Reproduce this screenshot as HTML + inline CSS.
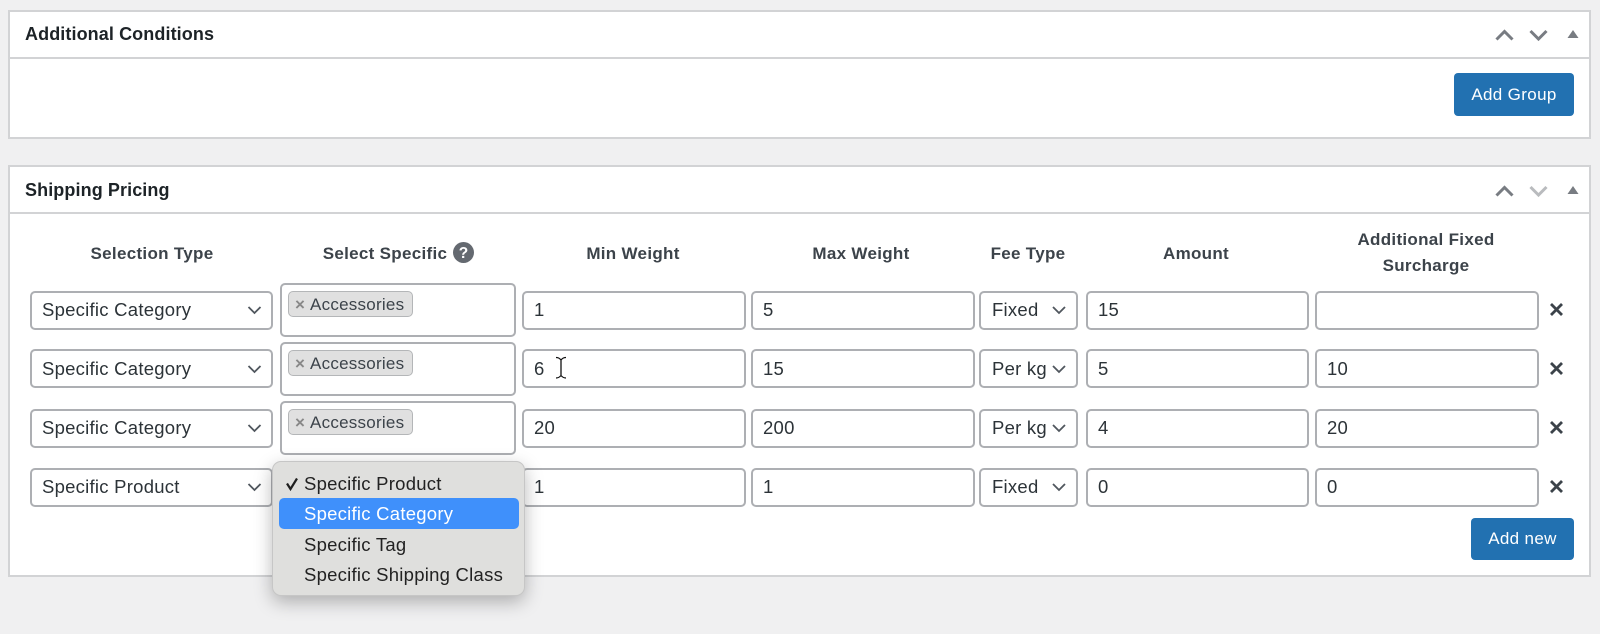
<!DOCTYPE html>
<html><head><meta charset="utf-8">
<style>
html,body{margin:0;padding:0;width:1600px;height:634px;overflow:hidden;background:#f0f0f1}
body{position:relative;font-family:"Liberation Sans",sans-serif;color:#2c3338;filter:blur(.35px)}
.p{position:absolute;box-sizing:border-box;background:#fff;border:2px solid #d2d3d5}
.l{position:absolute;background:#d2d3d5;height:2px}
.t{position:absolute;white-space:nowrap;line-height:20px;font-size:18.5px;letter-spacing:.25px}
.h{position:absolute;white-space:nowrap;line-height:20px;font-size:17px;font-weight:bold;color:#3c434a;transform:translateX(-50%);letter-spacing:.3px}
.ti{position:absolute;white-space:nowrap;line-height:20px;font-size:18px;font-weight:bold;color:#1d2327;letter-spacing:.1px}
.b{position:absolute;box-sizing:border-box;background:#fff;border:2px solid #adafb3;border-radius:5px}
.btn{position:absolute;box-sizing:border-box;background:#2271b1;border-radius:4px;color:#fff;font-size:17px;text-align:center;letter-spacing:.35px}
.chip{position:absolute;box-sizing:border-box;background:#e0e0e0;border:1.5px solid #b4b6b8;border-radius:5px;left:288px;width:125px;height:26px}
svg{position:absolute;overflow:visible}
.s{position:absolute}
</style></head><body>

<div class="p" style="left:8px;top:10px;width:1583px;height:129px"></div>
<div class="l" style="left:9px;top:57px;width:1581px"></div>
<div class="ti" style="left:25px;top:24px">Additional Conditions</div>
<div class="btn" style="left:1454px;top:73px;width:120px;height:43px;line-height:43px">Add Group</div>

<div class="p" style="left:8px;top:165px;width:1583px;height:412px"></div>
<div class="l" style="left:9px;top:212px;width:1581px"></div>
<div class="ti" style="left:25px;top:180px">Shipping Pricing</div>

<svg style="left:0;top:0" width="1600" height="634" fill="none">
<path d="M1496.500 39.500l8-8 8 8M1530.500 31l8 8 8-8" stroke="#787c82" stroke-width="3"/>
<path d="M1567.500 38l5.500-8 5.500 8z" fill="#787c82"/>
<path d="M1496.500 195.500l8-8 8 8" stroke="#787c82" stroke-width="3"/>
<path d="M1530.500 187l8 8 8-8" stroke="#b9bbbe" stroke-width="3"/>
<path d="M1567.500 194l5.500-8 5.500 8z" fill="#787c82"/>
</svg>

<div class="h" style="left:152px;top:244px">Selection Type</div>
<div class="h" style="left:385px;top:244px">Select Specific</div>
<svg style="left:453px;top:242px" width="21" height="21"><circle cx="10.500" cy="10.500" r="10.500" fill="#646970"/><text x="10.500" y="16" font-family="Liberation Sans" font-weight="bold" font-size="15.500" fill="#fff" text-anchor="middle">?</text></svg>
<div class="h" style="left:633px;top:244px">Min Weight</div>
<div class="h" style="left:861px;top:244px">Max Weight</div>
<div class="h" style="left:1028px;top:244px">Fee Type</div>
<div class="h" style="left:1196px;top:244px">Amount</div>
<div class="h" style="left:1426px;top:230px">Additional Fixed</div>
<div class="h" style="left:1426px;top:256px">Surcharge</div>

<!-- row 1 -->
<div class="b" style="left:30px;top:291px;width:243px;height:39px"></div>
<div class="t" style="left:42px;top:300px">Specific Category</div>
<div class="b" style="left:280px;top:283px;width:236px;height:54px"></div>
<div class="chip" style="top:291px"></div>
<div class="t" style="left:295px;top:295px;font-size:17px;color:#888;font-weight:bold">×</div>
<div class="t" style="left:310px;top:295px;font-size:17px;letter-spacing:.25px;color:#3c434a">Accessories</div>
<div class="b" style="left:522px;top:291px;width:224px;height:39px"></div>
<div class="t" style="left:534px;top:300px">1</div>
<div class="b" style="left:751px;top:291px;width:224px;height:39px"></div>
<div class="t" style="left:763px;top:300px">5</div>
<div class="b" style="left:979px;top:291px;width:99px;height:39px"></div>
<div class="t" style="left:992px;top:300px">Fixed</div>
<div class="b" style="left:1086px;top:291px;width:223px;height:39px"></div>
<div class="t" style="left:1098px;top:300px">15</div>
<div class="b" style="left:1315px;top:291px;width:224px;height:39px"></div>

<!-- row 2 -->
<div class="b" style="left:30px;top:349px;width:243px;height:39px"></div>
<div class="t" style="left:42px;top:359px">Specific Category</div>
<div class="b" style="left:280px;top:342px;width:236px;height:54px"></div>
<div class="chip" style="top:350px"></div>
<div class="t" style="left:295px;top:354px;font-size:17px;color:#888;font-weight:bold">×</div>
<div class="t" style="left:310px;top:354px;font-size:17px;letter-spacing:.25px;color:#3c434a">Accessories</div>
<div class="b" style="left:522px;top:349px;width:224px;height:39px"></div>
<div class="t" style="left:534px;top:359px">6</div>
<div class="b" style="left:751px;top:349px;width:224px;height:39px"></div>
<div class="t" style="left:763px;top:359px">15</div>
<div class="b" style="left:979px;top:349px;width:99px;height:39px"></div>
<div class="t" style="left:992px;top:359px">Per kg</div>
<div class="b" style="left:1086px;top:349px;width:223px;height:39px"></div>
<div class="t" style="left:1098px;top:359px">5</div>
<div class="b" style="left:1315px;top:349px;width:224px;height:39px"></div>
<div class="t" style="left:1327px;top:359px">10</div>

<!-- row 3 -->
<div class="b" style="left:30px;top:409px;width:243px;height:39px"></div>
<div class="t" style="left:42px;top:418px">Specific Category</div>
<div class="b" style="left:280px;top:401px;width:236px;height:54px"></div>
<div class="chip" style="top:409px"></div>
<div class="t" style="left:295px;top:413px;font-size:17px;color:#888;font-weight:bold">×</div>
<div class="t" style="left:310px;top:413px;font-size:17px;letter-spacing:.25px;color:#3c434a">Accessories</div>
<div class="b" style="left:522px;top:409px;width:224px;height:39px"></div>
<div class="t" style="left:534px;top:418px">20</div>
<div class="b" style="left:751px;top:409px;width:224px;height:39px"></div>
<div class="t" style="left:763px;top:418px">200</div>
<div class="b" style="left:979px;top:409px;width:99px;height:39px"></div>
<div class="t" style="left:992px;top:418px">Per kg</div>
<div class="b" style="left:1086px;top:409px;width:223px;height:39px"></div>
<div class="t" style="left:1098px;top:418px">4</div>
<div class="b" style="left:1315px;top:409px;width:224px;height:39px"></div>
<div class="t" style="left:1327px;top:418px">20</div>

<!-- row 4 -->
<div class="b" style="left:30px;top:468px;width:243px;height:39px"></div>
<div class="t" style="left:42px;top:477px">Specific Product</div>
<div class="b" style="left:522px;top:468px;width:224px;height:39px"></div>
<div class="t" style="left:534px;top:477px">1</div>
<div class="b" style="left:751px;top:468px;width:224px;height:39px"></div>
<div class="t" style="left:763px;top:477px">1</div>
<div class="b" style="left:979px;top:468px;width:99px;height:39px"></div>
<div class="t" style="left:992px;top:477px">Fixed</div>
<div class="b" style="left:1086px;top:468px;width:223px;height:39px"></div>
<div class="t" style="left:1098px;top:477px">0</div>
<div class="b" style="left:1315px;top:468px;width:224px;height:39px"></div>
<div class="t" style="left:1327px;top:477px">0</div>

<svg style="left:0;top:0" width="1600" height="634" fill="none">
<g stroke="#50575e" stroke-width="1.800">
<path d="M248.500 307l6 6 6-6M248.500 366l6 6 6-6M248.500 425l6 6 6-6M248.500 484l6 6 6-6"/>
<path d="M1053 307l6 6 6-6M1053 366l6 6 6-6M1053 425l6 6 6-6M1053 484l6 6 6-6"/>
</g>
<g stroke="#3c434a" stroke-width="2.800">
<path d="M1551 304l11 11M1562 304l-11 11M1551 363l11 11M1562 363l-11 11M1551 422l11 11M1562 422l-11 11M1551 481l11 11M1562 481l-11 11"/>
</g>
<path d="M556 357.500c2.500 0 3.500.8 5 2.500 1.500-1.700 2.500-2.500 5-2.500M561 360v15M556 378c2.500 0 3.500-.8 5-2.500 1.500 1.700 2.500 2.500 5 2.500" stroke="#111" stroke-width="1.300"/>
</svg>

<div class="btn" style="left:1471px;top:518px;width:103px;height:42px;line-height:42px">Add new</div>

<!-- dropdown -->
<div class="s" style="left:272px;top:461px;width:253px;height:135px;box-sizing:border-box;background:#dfdfdd;border:1px solid #c6c6c6;border-radius:9px;box-shadow:0 6px 18px rgba(0,0,0,.28)"></div>
<div class="s" style="left:279px;top:498px;width:240px;height:31px;background:#3f90fb;border-radius:5px"></div>
<svg style="left:286px;top:477px" width="14" height="14" fill="none"><path d="M1 6.500l3.500 5.500L11 1.500" stroke="#1f1f1f" stroke-width="2.200"/></svg>
<div class="t" style="left:304px;top:474px;color:#222">Specific Product</div>
<div class="t" style="left:304px;top:504px;color:#fff">Specific Category</div>
<div class="t" style="left:304px;top:535px;color:#222">Specific Tag</div>
<div class="t" style="left:304px;top:565px;color:#222">Specific Shipping Class</div>

</body></html>
